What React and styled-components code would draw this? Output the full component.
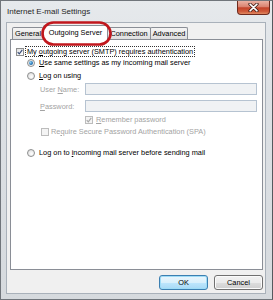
import React from "react";
import styled, { createGlobalStyle } from "styled-components";

const GlobalStyle = createGlobalStyle`
  html, body { margin: 0; padding: 0; background: #fff; }
  body { font-family: "Liberation Sans", Arial, sans-serif; }
`;

const Window = styled.div`
  position: relative;
  width: 273px;
  height: 300px;
  box-sizing: border-box;
  border: 1px solid #70757b;
  border-right-color: #55595e;
  background: linear-gradient(180deg, #e6e9ec 0%, #dde1e5 30%, #d6dade 100%);
  display: flex;
  flex-direction: column;
  font-size: 7.35px;
  color: #000;
`;

const TitleBar = styled.div`
  height: 21px;
  flex-shrink: 0;
  display: flex;
  justify-content: space-between;
  align-items: flex-start;
`;

const Title = styled.div`
  font-size: 8px;
  line-height: 21px;
  padding-left: 6px;
  color: #1e1e1e;
`;

const CloseButton = styled.div`
  width: 33px;
  height: 14px;
  margin-right: 2px;
  box-sizing: border-box;
  border: 1px solid #6e2a1e;
  border-top: none;
  border-radius: 0 0 4px 4px;
  background: linear-gradient(180deg, #eab1a3 0%, #d9826f 45%, #c3432a 52%, #cf5a3b 80%, #e08a62 100%);
  display: flex;
  align-items: center;
  justify-content: center;
`;

const Client = styled.div`
  flex: 1;
  margin: 0 6px 5px 5px;
  border: 1px solid #a9b1ba;
  background: #f0f0f0;
  padding: 2px 2px 3px 3px;
  display: flex;
  flex-direction: column;
`;

const TabStrip = styled.div`
  position: relative;
  z-index: 1;
  height: 14px;
  flex-shrink: 0;
  padding-left: 2px;
  display: flex;
  align-items: flex-end;
`;

const Tab = styled.div`
  width: ${(p) => p.$w}px;
  height: ${(p) => (p.$selected ? 15 : 12)}px;
  margin-bottom: ${(p) => (p.$selected ? -1 : 0)}px;
  margin-left: -1px;
  box-sizing: border-box;
  border: 1px solid #8a8e96;
  border-bottom: none;
  border-radius: 2px 2px 0 0;
  background: ${(p) =>
    p.$selected ? "#fff" : "linear-gradient(180deg, #f4f4f4 0%, #ebebeb 50%, #dedede 100%)"};
  display: flex;
  align-items: center;
  justify-content: center;
  padding-bottom: ${(p) => (p.$selected ? 2 : 0)}px;
  white-space: nowrap;
  &:first-child { margin-left: 0; }
`;

const Panel = styled.div`
  height: 231px;
  flex-shrink: 0;
  box-sizing: border-box;
  border: 1px solid #8a8e96;
  background: #fff;
  padding-right: 5px;
  display: flex;
  flex-direction: column;
`;

const Row = styled.div`
  height: ${(p) => p.$h || 11}px;
  margin-top: ${(p) => p.$top || 0}px;
  padding-left: ${(p) => p.$indent || 0}px;
  display: flex;
  align-items: center;
  color: ${(p) => (p.$disabled ? "#a3a3a3" : "#000")};
  white-space: nowrap;
`;

const Key = styled.span`
  text-decoration: underline;
`;

const Focus = styled.span`
  outline: 1px dotted #333;
  outline-offset: 0;
  padding: 0 1px;
  margin-left: -1px;
  line-height: 9px;
`;

const Box = styled.span`
  width: 8px;
  height: 8px;
  box-sizing: border-box;
  flex-shrink: 0;
  margin-right: ${(p) => p.$gap}px;
  border: 1px solid ${(p) => (p.$disabled ? "#bcbcbc" : "#8e8f8f")};
  border-radius: ${(p) => (p.$round ? "50%" : "0")};
  background: ${(p) =>
    p.$disabled
      ? "#f4f4f4"
      : p.$round
      ? "radial-gradient(circle at 60% 65%, #ffffff 0%, #e8e8e8 60%, #cfcfcf 100%)"
      : "linear-gradient(135deg, #dedede 0%, #f6f6f6 60%, #ffffff 100%)"};
  display: flex;
  align-items: center;
  justify-content: center;
`;

const Dot = styled.span`
  width: 4px;
  height: 4px;
  border-radius: 50%;
  background: radial-gradient(circle at 35% 35%, #8fd0f5 0%, #2a79b8 55%, #164f86 100%);
`;

const FieldLabel = styled.span`
  width: 45px;
  flex-shrink: 0;
`;

const Field = styled.div`
  flex: 1;
  height: 12px;
  box-sizing: border-box;
  border: 1px solid #b6c3d1;
  background: #f0f2f4;
`;

const ButtonRow = styled.div`
  margin-top: 5px;
  height: 15px;
  flex-shrink: 0;
  display: flex;
  justify-content: flex-end;
  gap: 6px;
`;

const Button = styled.div`
  width: 49px;
  height: 15px;
  box-sizing: border-box;
  border: 1px solid ${(p) => (p.$default ? "#3c7fb1" : "#707070")};
  border-radius: 3px;
  box-shadow: inset 0 0 0 1px ${(p) => (p.$default ? "#9edcf7" : "#fbfbfb")};
  background: ${(p) =>
    p.$default
      ? "linear-gradient(180deg, #eaf6fd 0%, #d9f0fc 50%, #bee6fd 52%, #a7d9f5 100%)"
      : "linear-gradient(180deg, #f2f2f2 0%, #ebebeb 50%, #dddddd 52%, #cfcfcf 100%)"};
  display: flex;
  align-items: center;
  justify-content: center;
`;

const Annotation = styled.svg`
  position: absolute;
  left: 40px;
  top: 20px;
  pointer-events: none;
  z-index: 5;
`;

function Check({ checked, disabled, gap = 3 }) {
  return (
    <Box $disabled={disabled} $gap={gap}>
      {checked && (
        <svg width="6" height="6" viewBox="0 0 6 6">
          <path
            d="M0.7 3.1 L2.3 4.8 L5.3 0.8"
            fill="none"
            stroke={disabled ? "#a8a8a8" : "#3b4f7a"}
            strokeWidth="1.2"
          />
        </svg>
      )}
    </Box>
  );
}

function Radio({ checked }) {
  return (
    <Box $round $gap={4}>
      {checked && <Dot />}
    </Box>
  );
}

export default function App() {
  return (
    <>
      <GlobalStyle />
      <Window>
        <TitleBar>
          <Title>Internet E-mail Settings</Title>
          <CloseButton>
            <svg width="11" height="9" viewBox="0 0 11 9">
              <path
                d="M2 1.2 L9 7.8 M9 1.2 L2 7.8"
                stroke="#3b1710"
                strokeWidth="3.2"
                strokeLinecap="round"
              />
              <path
                d="M2 1.2 L9 7.8 M9 1.2 L2 7.8"
                stroke="#ffffff"
                strokeWidth="1.6"
                strokeLinecap="round"
              />
            </svg>
          </CloseButton>
        </TitleBar>
        <Client>
          <TabStrip>
            <Tab $w={32}>General</Tab>
            <Tab $w={65} $selected>
              Outgoing Server
            </Tab>
            <Tab $w={44}>Connection</Tab>
            <Tab $w={38}>Advanced</Tab>
          </TabStrip>
          <Panel>
            <Row $top={6} $indent={5}>
              <Check checked />
              <Focus>
                My <Key>o</Key>utgoing server (SMTP) requires authentication
              </Focus>
            </Row>
            <Row $indent={16}>
              <Radio checked />
              <span>
                <Key>U</Key>se same settings as my incoming mail server
              </span>
            </Row>
            <Row $top={2} $indent={16}>
              <Radio />
              <span>
                <Key>L</Key>og on using
              </span>
            </Row>
            <Row $top={2} $h={12} $indent={29} $disabled>
              <FieldLabel>
                User <Key>N</Key>ame:
              </FieldLabel>
              <Field />
            </Row>
            <Row $top={5} $h={12} $indent={29} $disabled>
              <FieldLabel>
                <Key>P</Key>assword:
              </FieldLabel>
              <Field />
            </Row>
            <Row $top={2} $indent={74} $disabled>
              <Check checked disabled />
              <span>
                <Key>R</Key>emember password
              </span>
            </Row>
            <Row $top={1} $indent={30} $disabled>
              <Check disabled gap={2} />
              <span>
                Re<Key>q</Key>uire Secure Password Authentication (SPA)
              </span>
            </Row>
            <Row $top={10} $indent={16}>
              <Radio />
              <span>
                Log on to <Key>i</Key>ncoming mail server before sending mail
              </span>
            </Row>
          </Panel>
          <ButtonRow>
            <Button $default>OK</Button>
            <Button>Cancel</Button>
          </ButtonRow>
        </Client>
        <Annotation width="71" height="25" viewBox="0 0 71 25">
          <rect
            x="1.5"
            y="1.5"
            width="68"
            height="22"
            rx="11"
            ry="11"
            fill="none"
            stroke="#c1171d"
            strokeWidth="2.6"
          />
        </Annotation>
      </Window>
    </>
  );
}
